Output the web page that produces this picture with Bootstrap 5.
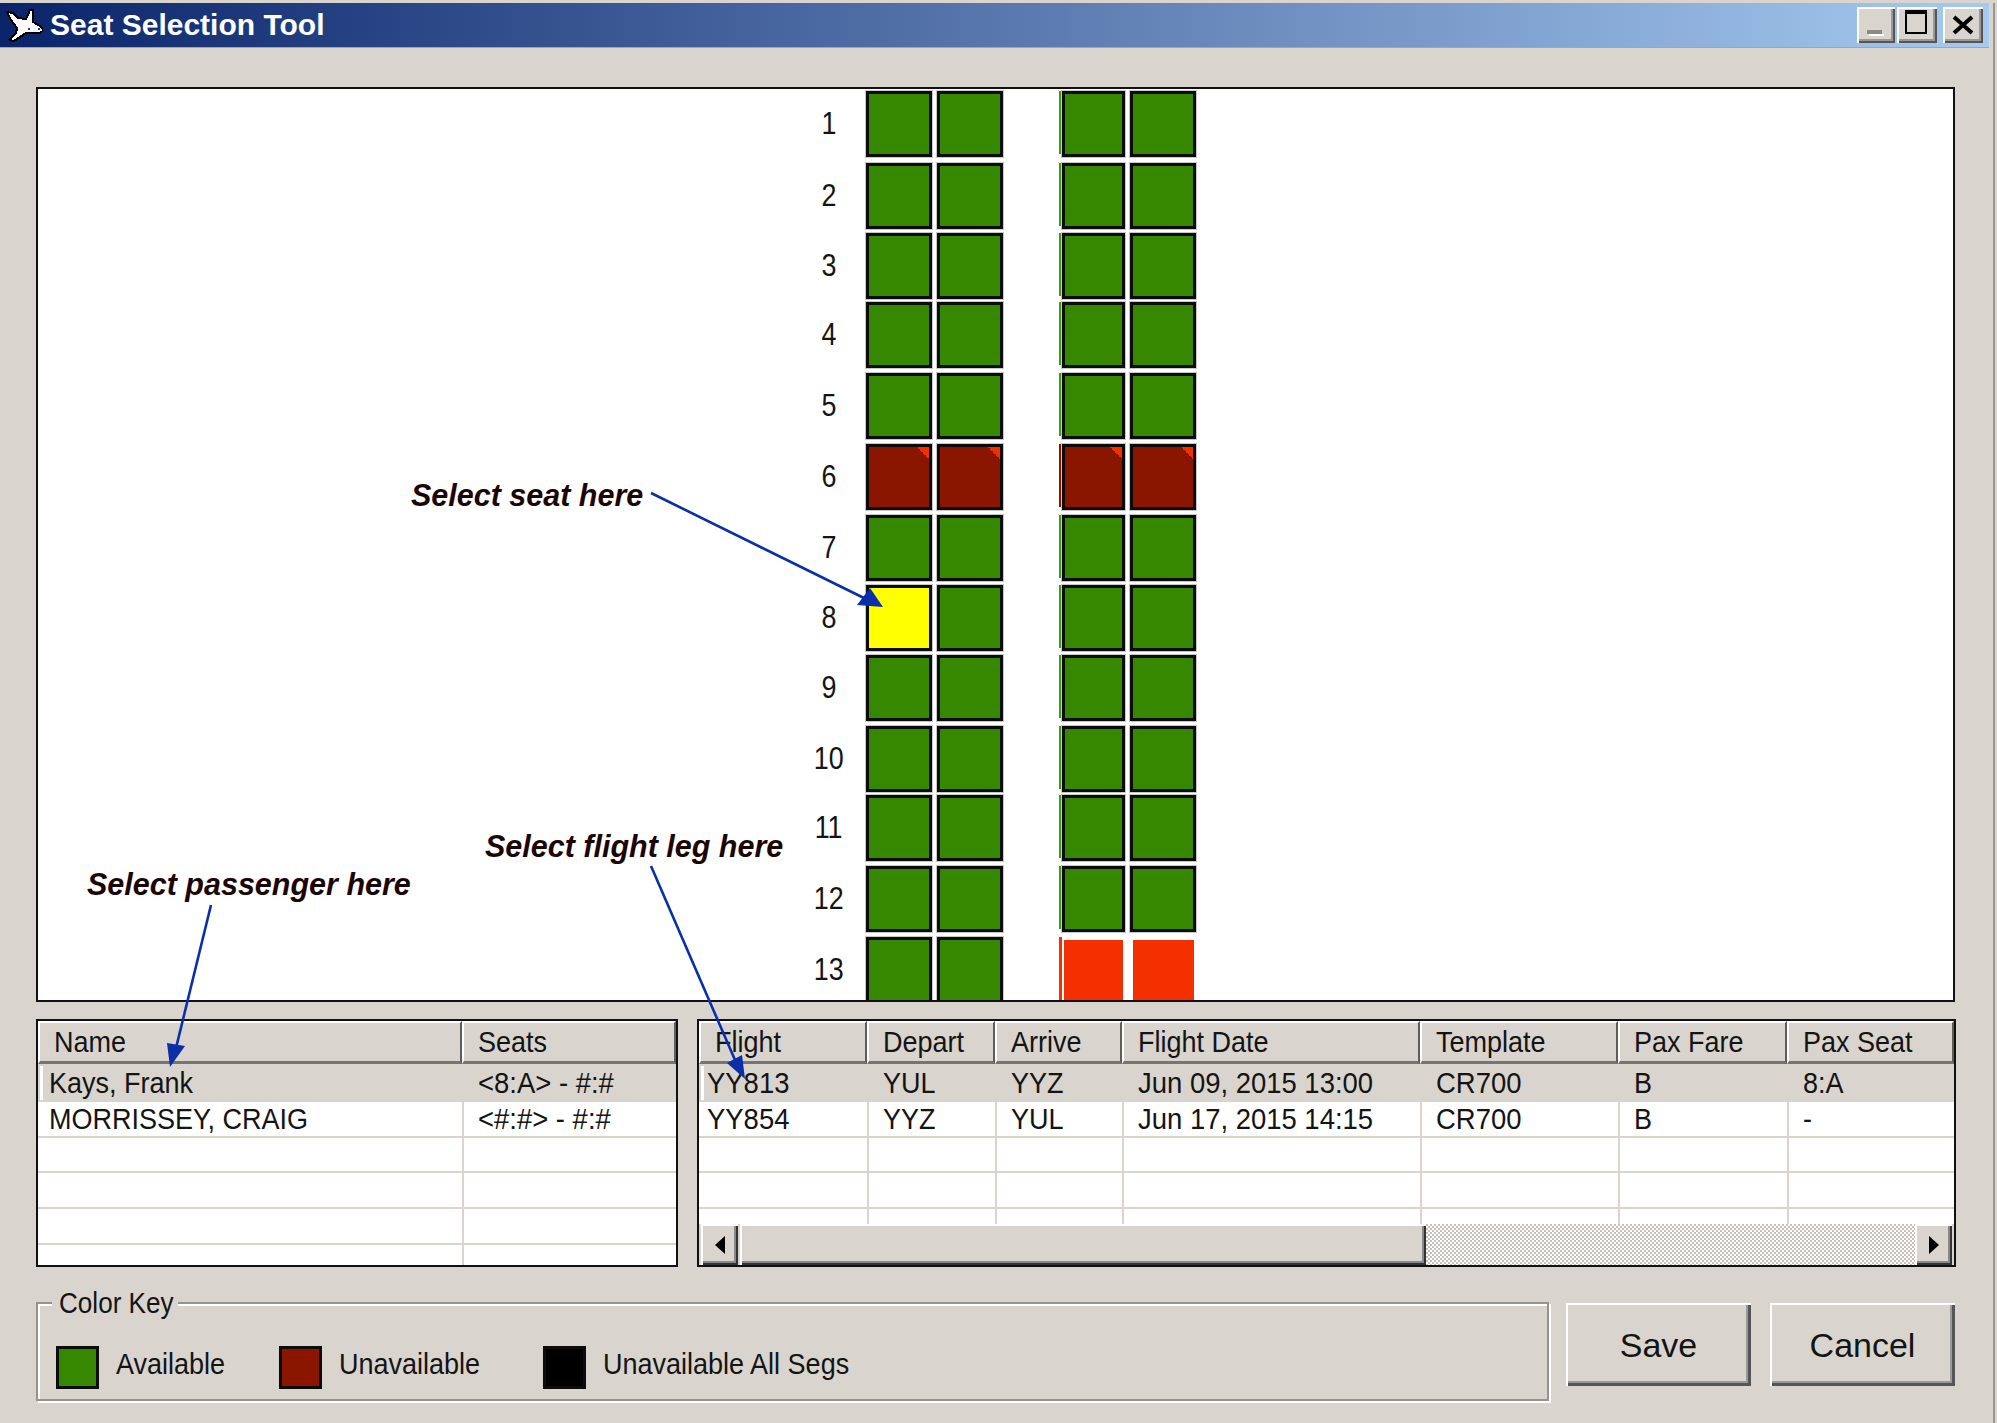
<!DOCTYPE html>
<html lang="en">
<head>
<meta charset="utf-8">
<title>Seat Selection Tool</title>
<link href="https://cdn.jsdelivr.net/npm/bootstrap@5.3.0/dist/css/bootstrap.min.css" rel="stylesheet">
<style>
html,body{height:1423px;overflow:hidden;background:#d9d5ce;}
body{font-family:"Liberation Sans",Arial,sans-serif;color:#141414;position:relative;}
.winframe{width:1995px;height:1423px;border-right:2px solid #9a9892;background:#d9d5ce;}
.titlerow{height:45px;width:1989px;margin-top:3px;padding-left:5px;padding-right:6px;background:linear-gradient(90deg,#0a246a,#a6caf0);border-bottom:1px solid #a5a5a8;}
.titletext{font-weight:700;font-size:30px;line-height:1;color:#fff;margin-left:7px;white-space:nowrap;}
.capbtn{width:38px;height:36px;background:#d9d5ce;border:0;padding:0;flex:none;box-shadow:inset 2px 2px 0 #fff,inset -2px -2px 0 #555,inset -4px -4px 0 #999;}
.capbtn svg{display:block;}
.capbtn-wide{width:40px;margin-left:2px;}
.capbtn-close{margin-left:6px;}
.seatpanel{margin:39px 0 0 36px;width:1919px;height:915px;background:#fff;border:2px solid #111;overflow:hidden;padding-top:2px;}
.seatgrid{display:grid;grid-template-columns:60px 66px 5px 66px 56px 66px 5px 66px;grid-template-rows:72px 70px 69px 71px 71px 71px 70px 70px 71px 69px 71px 71px 66px;margin-left:768px;width:max-content;}
.rowno{grid-column:1;height:66px;display:flex;align-items:center;justify-content:center;padding:0 14px 3px 0;font-size:32px;line-height:1;}
.wt{display:inline-block;transform:scaleX(.9);transform-origin:0 50%;white-space:nowrap;line-height:1;}
.wt.wt-num{transform:scaleX(.915);}
.rowno .wt{transform:scaleX(.84);transform-origin:50% 50%;}
.seat{height:66px;border:3px solid #0c0c0c;background:#368800;box-shadow:0 0 0 1px #c8c8c8;}
.seat-c3{margin-left:3px;}
.sliver{width:3px;height:63px;background:#3f9a18;}
.sliver-res{background:#8a1600;}
.sliver-open{background:#f53000;height:66px;}
.sliverwrap{grid-column:6;}
.seat-res{background:linear-gradient(45deg,transparent 50%,#f53000 50%) no-repeat top right/12px 12px,#8a1600;}
.seat-sel{background:#ffff00;}
.seat-open{background:#f53000;border:0;box-shadow:none;height:64px;margin:3px 2px 0 3px;}
.seat-open.seat-c3{margin-left:5px;}
.gridbox{height:248px;border:2px solid #111;background:#fff;overflow:hidden;}
.listsrow{margin:17px 0 0 36px;gap:19px;}
.paxbox{width:642px;}
.fltbox{width:1259px;display:flex;flex-direction:column;}
.fltbody{flex:1 1 auto;overflow:hidden;min-height:0;}
.wgrid.table{table-layout:fixed;margin:0;width:100%;border-collapse:separate;border-spacing:0;font-size:30px;line-height:1;}
.wgrid.table>thead>tr>th{height:43px;background-color:#d9d5ce;box-shadow:none;font-weight:400;color:#141414;padding:0 0 0 14px;border-style:solid;border-width:2px 2px 3px 2px;border-color:#fff #5f5d59 #777571 #fff;vertical-align:middle;}
.wgrid.table>thead>tr>th:first-child{padding-left:14px;}
.wgrid.table>tbody>tr>td{background-color:#fff;box-shadow:none;color:#141414;padding:0 0 0 14px;border-style:solid;border-width:0 0 2px 2px;border-color:#d9d5ce;vertical-align:middle;}
.wgrid.table>tbody>tr>td:first-child{padding-left:11px;border-left-width:0;}
.wgrid.fltgrid.table>tbody>tr>td:first-child{padding-left:8px;}
.wgrid.table>tbody>tr.rowsel>td{background-color:#d9d5ce;border-width:0;height:38px;padding-left:16px;}
.wgrid.table>tbody>tr.rowsel>td:first-child{background:linear-gradient(#fff,#fff) no-repeat 2px 2px/3px 34px,#d9d5ce;padding-left:11px;}
.wgrid.fltgrid.table>tbody>tr.rowsel>td:first-child{padding-left:8px;}
.wgrid.table>tbody>tr.rowb>td{height:36px;}
.wgrid.table>tbody>tr.rowc>td{height:35px;}
.paxcols col:nth-child(1){width:424px;}
.fltcols col:nth-child(1){width:168px;}
.fltcols col:nth-child(2){width:128px;}
.fltcols col:nth-child(3){width:127px;}
.fltcols col:nth-child(4){width:298px;}
.fltcols col:nth-child(5){width:198px;}
.fltcols col:nth-child(6){width:169px;}
.fltcols col:nth-child(7){width:167px;}
.hscroll{height:41px;flex:none;background:#d9d5ce;padding:0 2px 0 2px;}
.sbtn{width:37px;height:41px;flex:none;background:#d9d5ce;border:0;padding:0;display:flex;align-items:center;justify-content:center;box-shadow:inset 2px 2px 0 #fff,inset -2px -2px 0 #333,inset -4px -4px 0 #888;}
.sthumb{width:686px;height:41px;flex:none;margin-left:2px;background:#d9d5ce;box-shadow:inset 2px 2px 0 #fff,inset -2px -2px 0 #333,inset -4px -4px 0 #888;}
.strack{flex:1 1 auto;height:41px;background:repeating-conic-gradient(#fff 0 25%,#c4c0b9 0 50%) 0 0/4px 4px;}
.bottomrow{margin:35px 0 0 36px;width:1919px;}
.keybox{width:1514px;height:113px;margin:-14px 0 0;padding:0 0 0 18px;min-width:0;border:2px solid #96938d;box-shadow:inset 2px 2px 0 #fff,2px 2px 0 #fff;}
.keybox legend{float:none;width:126px;height:30px;margin:0 0 0 -4px;padding:0 0 0 7px;font-size:30px;line-height:30px;background:#d9d5ce;display:block;}
.keybox legend .wt{transform:scaleX(.87);}
.keyitems{margin-top:28px;}
.keyitem{font-size:30px;}
.keyitem .wt{margin-bottom:8px;}
.keyitem:nth-child(1){width:223px;}
.keyitem:nth-child(2){width:264px;}
.swatch{width:43px;height:43px;border:3px solid #0c0c0c;margin-right:17px;flex:none;}
.sw-green{background:#368800;}.sw-red{background:#8a1600;}.sw-black{background:#000;}
.btnrow{gap:19px;margin-left:17px;margin-top:1px;}
.winbtn.btn{width:185px;height:83px;font-size:34px;line-height:1;border:0;border-radius:0;background:#d9d5ce;color:#141414;padding:0;box-shadow:inset 2px 2px 0 #fff,inset -3px -3px 0 #555,inset -5px -5px 0 #999;}
.overlay{position:absolute;left:0;top:0;width:1997px;height:1423px;pointer-events:none;}
.callout{position:absolute;font-weight:700;font-style:italic;font-size:30.5px;line-height:1;color:#1c0505;white-space:nowrap;}
.co-seat{left:411px;top:480px;}
.co-flight{left:485px;top:831px;}
.co-pax{left:87px;top:869px;}
</style>
</head>
<body>
<div class="winframe">
  <div class="titlerow d-flex align-items-center">
    <svg width="38" height="36" viewBox="5 7 38 36" shape-rendering="crispEdges" aria-hidden="true">
      <polygon points="7,12 13,13 18,18 26,19 30,10 33,10 33,22 40,26 44,30 40,33 26,33 14,41 9,40 16,33 17,28 11,20" fill="#fff" stroke="#000" stroke-width="2" stroke-linejoin="bevel"/>
      <rect x="28" y="28" width="2" height="2" fill="#2222ff"/><rect x="38" y="28" width="2" height="2" fill="#2222ff"/>
    </svg>
    <span class="titletext">Seat Selection Tool</span>
    <div class="d-flex ms-auto">
      <button class="capbtn" type="button" aria-label="Minimize"><svg width="38" height="36"><rect x="10" y="23" width="15" height="4" fill="#8a8a86"/><rect x="12" y="27" width="15" height="2" fill="#fff"/></svg></button>
      <button class="capbtn capbtn-wide" type="button" aria-label="Maximize"><svg width="40" height="36"><path d="M9 4h20v22H9z" fill="none" stroke="#000" stroke-width="2"/><rect x="8" y="3" width="22" height="4" fill="#000"/></svg></button>
      <button class="capbtn capbtn-wide capbtn-close" type="button" aria-label="Close"><svg width="40" height="36"><path d="M11 10l18 16M29 10L11 26" stroke="#000" stroke-width="4" fill="none"/></svg></button>
    </div>
  </div>

  <div class="seatpanel">
    <div class="seatgrid" id="seats"></div>
  </div>

  <div class="listsrow d-flex">
    <div class="gridbox paxbox">
      <table class="table wgrid">
        <colgroup class="paxcols"><col><col></colgroup>
        <thead><tr><th><span class="wt">Name</span></th><th><span class="wt">Seats</span></th></tr></thead>
        <tbody>
          <tr class="rowsel"><td><span class="wt">Kays, Frank</span></td><td><span class="wt wt-num">&lt;8:A&gt; - #:#</span></td></tr>
          <tr class="rowb"><td><span class="wt">MORRISSEY, CRAIG</span></td><td><span class="wt wt-num">&lt;#:#&gt; - #:#</span></td></tr>
          <tr class="rowc"><td></td><td></td></tr>
          <tr class="rowb"><td></td><td></td></tr>
          <tr class="rowb"><td></td><td></td></tr>
          <tr class="rowb"><td></td><td></td></tr>
        </tbody>
      </table>
    </div>
    <div class="gridbox fltbox">
      <div class="fltbody">
        <table class="table wgrid fltgrid">
          <colgroup class="fltcols"><col><col><col><col><col><col><col></colgroup>
          <thead><tr><th><span class="wt">Flight</span></th><th><span class="wt">Depart</span></th><th><span class="wt">Arrive</span></th><th><span class="wt">Flight Date</span></th><th><span class="wt">Template</span></th><th><span class="wt">Pax Fare</span></th><th><span class="wt">Pax Seat</span></th></tr></thead>
          <tbody>
            <tr class="rowsel"><td><span class="wt wt-num">YY813</span></td><td><span class="wt">YUL</span></td><td><span class="wt">YYZ</span></td><td><span class="wt wt-num">Jun 09, 2015 13:00</span></td><td><span class="wt wt-num">CR700</span></td><td><span class="wt">B</span></td><td><span class="wt">8:A</span></td></tr>
            <tr class="rowb"><td><span class="wt wt-num">YY854</span></td><td><span class="wt">YYZ</span></td><td><span class="wt">YUL</span></td><td><span class="wt wt-num">Jun 17, 2015 14:15</span></td><td><span class="wt wt-num">CR700</span></td><td><span class="wt">B</span></td><td><span class="wt">-</span></td></tr>
            <tr class="rowc"><td></td><td></td><td></td><td></td><td></td><td></td><td></td></tr>
            <tr class="rowb"><td></td><td></td><td></td><td></td><td></td><td></td><td></td></tr>
            <tr class="rowb"><td></td><td></td><td></td><td></td><td></td><td></td><td></td></tr>
          </tbody>
        </table>
      </div>
      <div class="hscroll d-flex">
        <button class="sbtn" type="button" aria-label="Scroll left"><svg width="12" height="18"><polygon points="11,0 11,18 1,9" fill="#000"/></svg></button>
        <div class="sthumb"></div>
        <div class="strack"></div>
        <button class="sbtn" type="button" aria-label="Scroll right"><svg width="12" height="18"><polygon points="1,0 1,18 11,9" fill="#000"/></svg></button>
      </div>
    </div>
  </div>

  <div class="bottomrow d-flex align-items-start">
    <fieldset class="keybox">
      <legend><span class="wt">Color Key</span></legend>
      <div class="keyitems d-flex">
        <div class="keyitem d-flex align-items-center"><span class="swatch sw-green"></span><span class="wt">Available</span></div>
        <div class="keyitem d-flex align-items-center"><span class="swatch sw-red"></span><span class="wt">Unavailable</span></div>
        <div class="keyitem d-flex align-items-center"><span class="swatch sw-black"></span><span class="wt">Unavailable All Segs</span></div>
      </div>
    </fieldset>
    <div class="btnrow d-flex">
      <button class="btn winbtn" type="button">Save</button>
      <button class="btn winbtn" type="button">Cancel</button>
    </div>
  </div>
</div>

<div class="overlay">
  <div class="callout co-seat">Select seat here</div>
  <div class="callout co-flight">Select flight leg here</div>
  <div class="callout co-pax">Select passenger here</div>
  <svg width="1997" height="1423" viewBox="0 0 1997 1423" aria-hidden="true">
    <g stroke="#0a2fa8" stroke-width="2.6" fill="none">
      <path d="M651 493L868 600"/>
      <path d="M211 905L176 1048"/>
      <path d="M651 866L735 1060"/>
    </g>
    <g fill="#0a2fa8">
      <polygon points="883,607 857,605 870,588"/>
      <polygon points="170,1067 167,1043 185,1046"/>
      <polygon points="745,1079 727,1063 742,1055"/>
    </g>
  </svg>
</div>

<script src="https://cdn.jsdelivr.net/npm/bootstrap@5.3.0/dist/js/bootstrap.bundle.min.js"></script>
<script>
const grid=document.getElementById('seats');
function seat(col,cls,row){const d=document.createElement('div');d.className='seat '+cls;d.style.gridRow=row;d.style.gridColumn=col;grid.appendChild(d);}
for(let r=1;r<=13;r++){
  const n=document.createElement('div');n.className='rowno';n.style.gridRow=r;n.innerHTML='<span class="wt">'+r+'</span>';grid.appendChild(n);
  const res=r===6, right=r===13?'seat-open':(res?'seat-res':'');
  seat(2,r===8?'seat-sel':(res?'seat-res':''),r);
  seat(4,res?'seat-res':'',r);
  const s=document.createElement('div');s.className='sliverwrap';s.style.gridRow=r;
  s.innerHTML='<div class="sliver'+(res?' sliver-res':'')+(r===13?' sliver-open':'')+'"></div>';grid.appendChild(s);
  seat(6,right+' seat-c3',r);
  seat(8,right,r);
}
</script>
</body>
</html>
